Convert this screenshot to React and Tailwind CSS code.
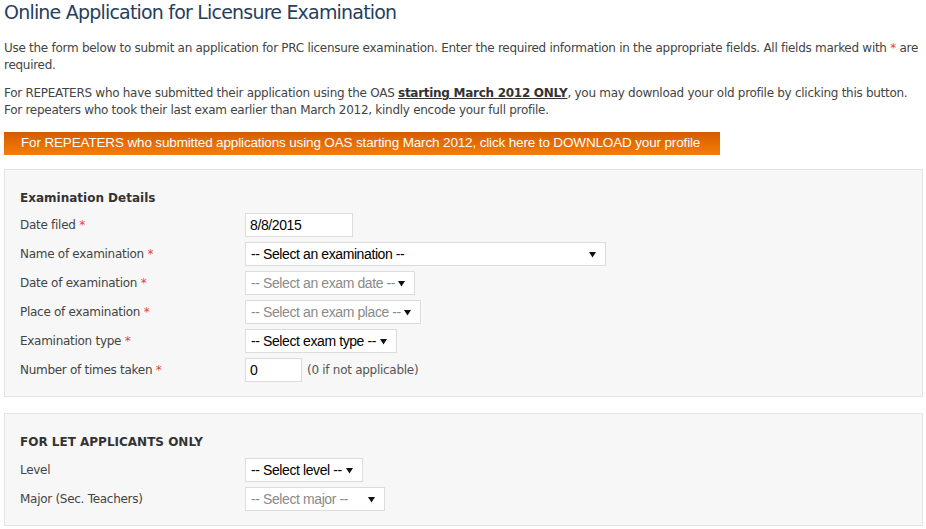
import React from 'react';

const Req = () => <span className="text-[#e8413c]"> *</span>;

const Arrow = () => (
  <svg width="7" height="7" viewBox="0 0 7 7" className="shrink-0">
    <path d="M0 1 L7 1 L3.5 6.5 Z" fill="#111" />
  </svg>
);

const Select = ({ text, width, disabled }) => (
  <div
    className={`flex h-[24px] items-center justify-between border border-[#dcdcdc] bg-white pl-[5px] pr-[9px] text-[14px] tracking-[-0.4px] ${
      disabled ? 'text-[#8a8a8a]' : 'text-black'
    }`}
    style={{ width }}
  >
    <span className="whitespace-nowrap">{text}</span>
    <Arrow />
  </div>
);

const TextBox = ({ value, width }) => (
  <div
    className="flex h-[24px] items-center border border-[#dcdcdc] bg-white pl-[4px] text-[14px] tracking-[-0.4px] text-black"
    style={{ width }}
  >
    {value}
  </div>
);

const Row = ({ label, required, children }) => (
  <div className="mb-[5px] flex h-[24px] items-center">
    <div className="w-[225px] shrink-0 text-[#444]">
      {label}
      {required && <Req />}
    </div>
    <div className="flex items-center gap-[5px] font-['Liberation_Sans',Arial,sans-serif]">
      {children}
    </div>
  </div>
);

const Panel = ({ title, headGap, children }) => (
  <div className="border border-[#e4e4e4] bg-[#f7f7f7] pl-[15px] pt-[18px] pb-[9px]">
    <div className={`${headGap} h-[20px] font-bold leading-[20px] tracking-[0px] text-[#333]`}>{title}</div>
    {children}
  </div>
);

export default function App() {
  return (
    <div className="min-h-screen bg-white px-[4px] font-['DejaVu_Sans',Verdana,sans-serif] text-[12px] tracking-[-0.28px] text-[#444]">
      <h1 className="h-[24px] text-[19px] leading-[24px] tracking-[-0.8px] text-[#263e5c]">
        Online Application for Licensure Examination
      </h1>

      <p className="mt-[16px] leading-[17px]">
        Use the form below to submit an application for PRC licensure examination. Enter the required
        information in the appropriate fields. All fields marked with <span className="text-[#e8413c]">*</span> are
        required.
      </p>

      <p className="mt-[11px] leading-[17px]">
        For REPEATERS who have submitted their application using the OAS{' '}
        <span className="font-bold text-[#333] underline">starting March 2012 ONLY</span>, you may download your
        old profile by clicking this button.
        <br />
        For repeaters who took their last exam earlier than March 2012, kindly encode your full profile.
      </p>

      <button className="mt-[13px] block h-[23px] w-[716px] whitespace-nowrap bg-gradient-to-b from-[#d45c00] to-[#f77d08] pl-[17px] text-left font-['Liberation_Sans',Arial,sans-serif] text-[13.5px] tracking-[-0.15px] text-white">
        For REPEATERS who submitted applications using OAS starting March 2012, click here to DOWNLOAD your profile
      </button>

      <div className="mt-[14px] w-[919px]">
        <Panel title="Examination Details" headGap="mb-[5px]">
          <Row label="Date filed" required>
            <TextBox value="8/8/2015" width={108} />
          </Row>
          <Row label="Name of examination" required>
            <Select text="-- Select an examination --" width={361} />
          </Row>
          <Row label="Date of examination" required>
            <Select text="-- Select an exam date --" width={170} disabled />
          </Row>
          <Row label="Place of examination" required>
            <Select text="-- Select an exam place --" width={176} disabled />
          </Row>
          <Row label="Examination type" required>
            <Select text="-- Select exam type --" width={152} />
          </Row>
          <Row label="Number of times taken" required>
            <TextBox value="0" width={57} />
            <span className="font-['DejaVu_Sans',Verdana,sans-serif] text-[12px] tracking-[-0.28px] text-[#555]">
              (0 if not applicable)
            </span>
          </Row>
        </Panel>

        <div className="mt-[16px]">
          <Panel title="FOR LET APPLICANTS ONLY" headGap="mb-[6px]">
            <Row label="Level">
              <Select text="-- Select level --" width={118} />
            </Row>
            <Row label="Major (Sec. Teachers)">
              <Select text="-- Select major --" width={140} disabled />
            </Row>
          </Panel>
        </div>
      </div>
    </div>
  );
}
